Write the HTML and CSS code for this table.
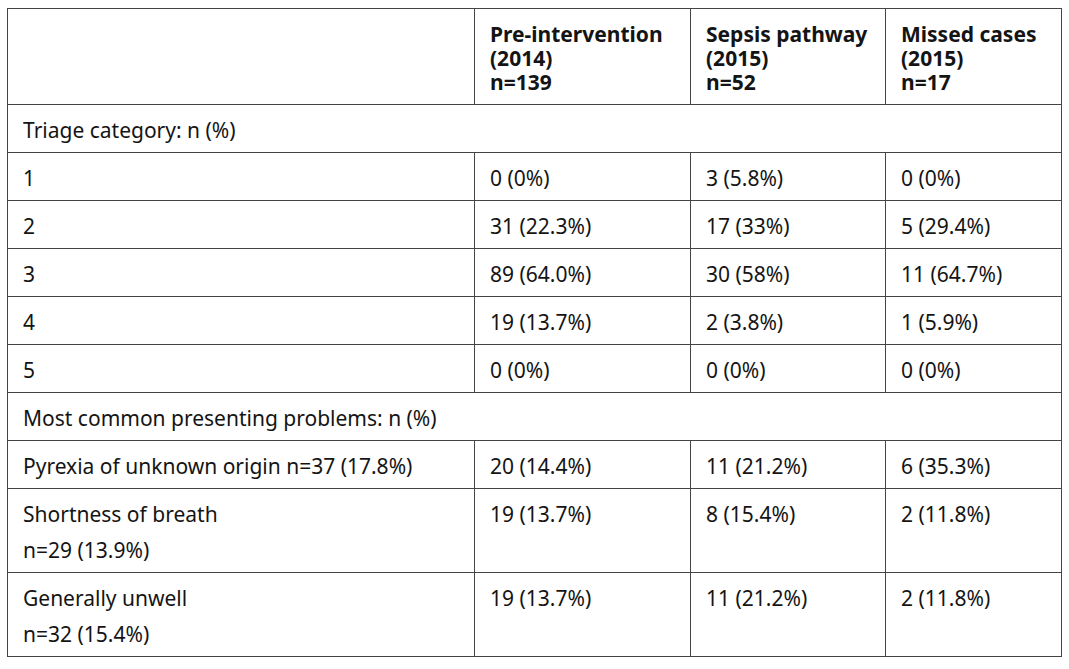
FILE: index.html
```html
<!DOCTYPE html>
<html lang="en">
<head>
<meta charset="utf-8">
<title>Sepsis table</title>
<link rel="stylesheet" href="styles.css">
</head>
<body>
<table class="data">
  <colgroup>
    <col class="c1"><col class="c2"><col class="c3"><col class="c4">
  </colgroup>
  <thead>
    <tr>
      <th></th>
      <th>Pre-intervention<br>(2014)<br>n=139</th>
      <th>Sepsis pathway<br>(2015)<br>n=52</th>
      <th>Missed cases<br>(2015)<br>n=17</th>
    </tr>
  </thead>
  <tbody>
    <tr><td colspan="4">Triage category: n (%)</td></tr>
    <tr><td>1</td><td>0 (0%)</td><td>3 (5.8%)</td><td>0 (0%)</td></tr>
    <tr><td>2</td><td>31 (22.3%)</td><td>17 (33%)</td><td>5 (29.4%)</td></tr>
    <tr><td>3</td><td>89 (64.0%)</td><td>30 (58%)</td><td>11 (64.7%)</td></tr>
    <tr><td>4</td><td>19 (13.7%)</td><td>2 (3.8%)</td><td>1 (5.9%)</td></tr>
    <tr><td>5</td><td>0 (0%)</td><td>0 (0%)</td><td>0 (0%)</td></tr>
    <tr><td colspan="4">Most common presenting problems: n (%)</td></tr>
    <tr><td>Pyrexia of unknown origin n=37 (17.8%)</td><td>20 (14.4%)</td><td>11 (21.2%)</td><td>6 (35.3%)</td></tr>
    <tr><td><p class="line">Shortness of breath</p><p class="line">n=29 (13.9%)</p></td><td>19 (13.7%)</td><td>8 (15.4%)</td><td>2 (11.8%)</td></tr>
    <tr><td><p class="line">Generally unwell</p><p class="line">n=32 (15.4%)</p></td><td>19 (13.7%)</td><td>11 (21.2%)</td><td>2 (11.8%)</td></tr>
  </tbody>
</table>
</body>
</html>
```
FILE: styles.css
```css
html, body {
  margin: 0;
  padding: 0;
  background: #ffffff;
}
body {
  padding: 8px 8px 0 7px;
  font-family: "Noto Sans", "Open Sans", sans-serif;
  font-size: 21px;
  color: #141414;
}
.data {
  border-collapse: collapse;
  width: 1054px;
  table-layout: fixed;
  border: 1.5px solid #222;
}
.c1 { width: 467px; }
.c2 { width: 216px; }
.c3 { width: 195px; }
.c4 { width: 176px; }
.data th,
.data td {
  border: 1px solid #444;
  padding: 13px 15px 10px 15px;
  line-height: 24px;
  text-align: left;
  vertical-align: top;
}
.data th {
  font-weight: 700;
}
.line {
  margin: 0;
}
.line + .line {
  margin-top: 12px;
}
```
